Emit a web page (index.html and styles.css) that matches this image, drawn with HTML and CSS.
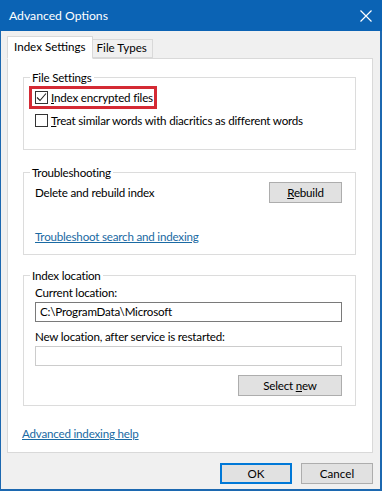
FILE: index.html
```html
<!DOCTYPE html>
<html>
<head>
<meta charset="utf-8">
<link rel="stylesheet" href="styles.css">
</head>
<body>
<div class="window">
  <div class="titlebar">
    <span class="title">Advanced Options</span>
    <svg class="close" width="12" height="12" viewBox="0 0 12 12"><path d="M0.5 0.5 L11.5 11.5 M11.5 0.5 L0.5 11.5" stroke="#fff" stroke-width="1.2" fill="none"/></svg>
  </div>
  <div class="client">
    <div class="tabs">
      <div class="tab active">Index Settings</div>
      <div class="tab">File Types</div>
    </div>
    <div class="panel">
      <fieldset class="group g1">
        <legend>File Settings</legend>
        <div class="check highlight">
          <span class="box"><svg width="11" height="11" viewBox="0 0 11 11"><path d="M1 5.5 L4 8.5 L10 1.5" stroke="#222" stroke-width="1.1" fill="none"/></svg></span>
          <span class="lbl"><u>I</u>ndex encrypted files</span>
        </div>
        <div class="check">
          <span class="box"></span>
          <span class="lbl"><u>T</u>reat similar words with diacritics as different words</span>
        </div>
      </fieldset>
      <fieldset class="group g2">
        <legend>Troubleshooting</legend>
        <div class="row">
          <span>Delete and rebuild index</span>
          <span class="btn rebuild"><span><u>R</u>ebuild</span></span>
        </div>
        <a class="link ts">Troubleshoot search and indexing</a>
      </fieldset>
      <fieldset class="group g3">
        <legend>Index location</legend>
        <div class="fl">Current location:</div>
        <div class="input">C:\ProgramData\Microsoft</div>
        <div class="fl fl2">New location, after service is restarted:</div>
        <div class="input"></div>
        <div class="btnrow"><span class="btn selnew"><span>Select <u>n</u>ew</span></span></div>
      </fieldset>
      <a class="link help">Advanced indexing help</a>
    </div>
    <div class="footer">
      <span class="btn ok">OK</span>
      <span class="btn cancel">Cancel</span>
    </div>
  </div>
</div>
</body>
</html>
```
FILE: styles.css
```css
html, body { margin: 0; padding: 0; }
body { font-family: Lato, "Noto Sans", sans-serif; font-size: 11.6px; color: #000; background: #fff; }
.window { width: 382px; height: 491px; box-sizing: border-box; background: #f0f0f0; border-left: 1px solid #1c68b0; border-right: 2px solid #1c68b0; border-bottom: 2px solid #1c68b0; display: flex; flex-direction: column; }
.titlebar { height: 31px; background: #0b63b4; display: flex; align-items: center; justify-content: space-between; padding: 0 9px 0 9px; flex: none; margin: 0 -2px 0 -1px; }
.title { color: #fff; font-size: 12.2px; }
.close { margin-right: 1px; }
.client { padding: 6px 7px 0 6px; display: flex; flex-direction: column; }
.tabs { display: flex; align-items: flex-end; height: 21px; position: relative; z-index: 1; }
.tab { border: 1px solid #d9d9d9; background: #f0f0f0; padding: 0 5px 0 4px; height: 17px; line-height: 16px; border-left: none; }
.tab.active { background: #fff; border-left: 1px solid #d9d9d9; border-bottom: 1px solid #fff; height: 21px; line-height: 20px; padding: 0 6px 0 6px; margin-bottom: -1px; }
.panel { background: #fff; border: 1px solid #d9d9d9; height: 395px; box-sizing: border-box; padding: 11px 16px 0 15px; letter-spacing: -0.2px; }
.group { border: 1px solid #dcdcdc; margin: 0; padding: 0 13px 0 11px; min-width: 0; box-sizing: border-box; }
legend { padding: 0 2px; margin-left: -5px; line-height: 15px; height: 15px; color: #000; }
.g1 { height: 80px; padding-top: 4px; }
.check { display: flex; align-items: center; height: 17px; margin-bottom: 6px; }
.check .box { width: 11px; height: 11px; border: 1px solid #333; background: #fff; margin-right: 3px; display: flex; flex: none; }
.check.highlight { outline: 3px solid #d42a34; outline-offset: 0; width: fit-content; margin-left: -3px; padding: 0 1px 0 3px; }
.g2 { margin-top: 15px; height: 90px; padding-top: 2px; }
.row { display: flex; justify-content: space-between; align-items: center; }
.btn { display: inline-flex; align-items: center; justify-content: center; background: #e1e1e1; border: 1px solid #adadad; box-sizing: border-box; height: 21px; }
.rebuild { width: 73px; }
.link { color: #1a6aa3; text-decoration: underline; display: block; line-height: 16px; }
.ts { margin-top: 26px; }
.g3 { margin-top: 13px; height: 138px; }
.fl { line-height: 17px; margin-top: 1px; }
.fl2 { margin-top: 6px; }
.input { height: 20px; border: 1px solid #7a7a7a; box-sizing: border-box; padding-left: 4px; line-height: 18px; margin-top: 1px; background: #fff; }
.input:empty { border-color: #cccccc; }
.btnrow { display: flex; justify-content: flex-end; margin-top: 9px; }
.selnew { width: 104px; }
.help { margin-top: 20px; margin-left: -1px; }
.footer { display: flex; justify-content: flex-end; gap: 9px; margin-top: 10px; }
.ok, .cancel { width: 72px; height: 21px; }
.ok { border: 2px solid #0078d7; }
```
